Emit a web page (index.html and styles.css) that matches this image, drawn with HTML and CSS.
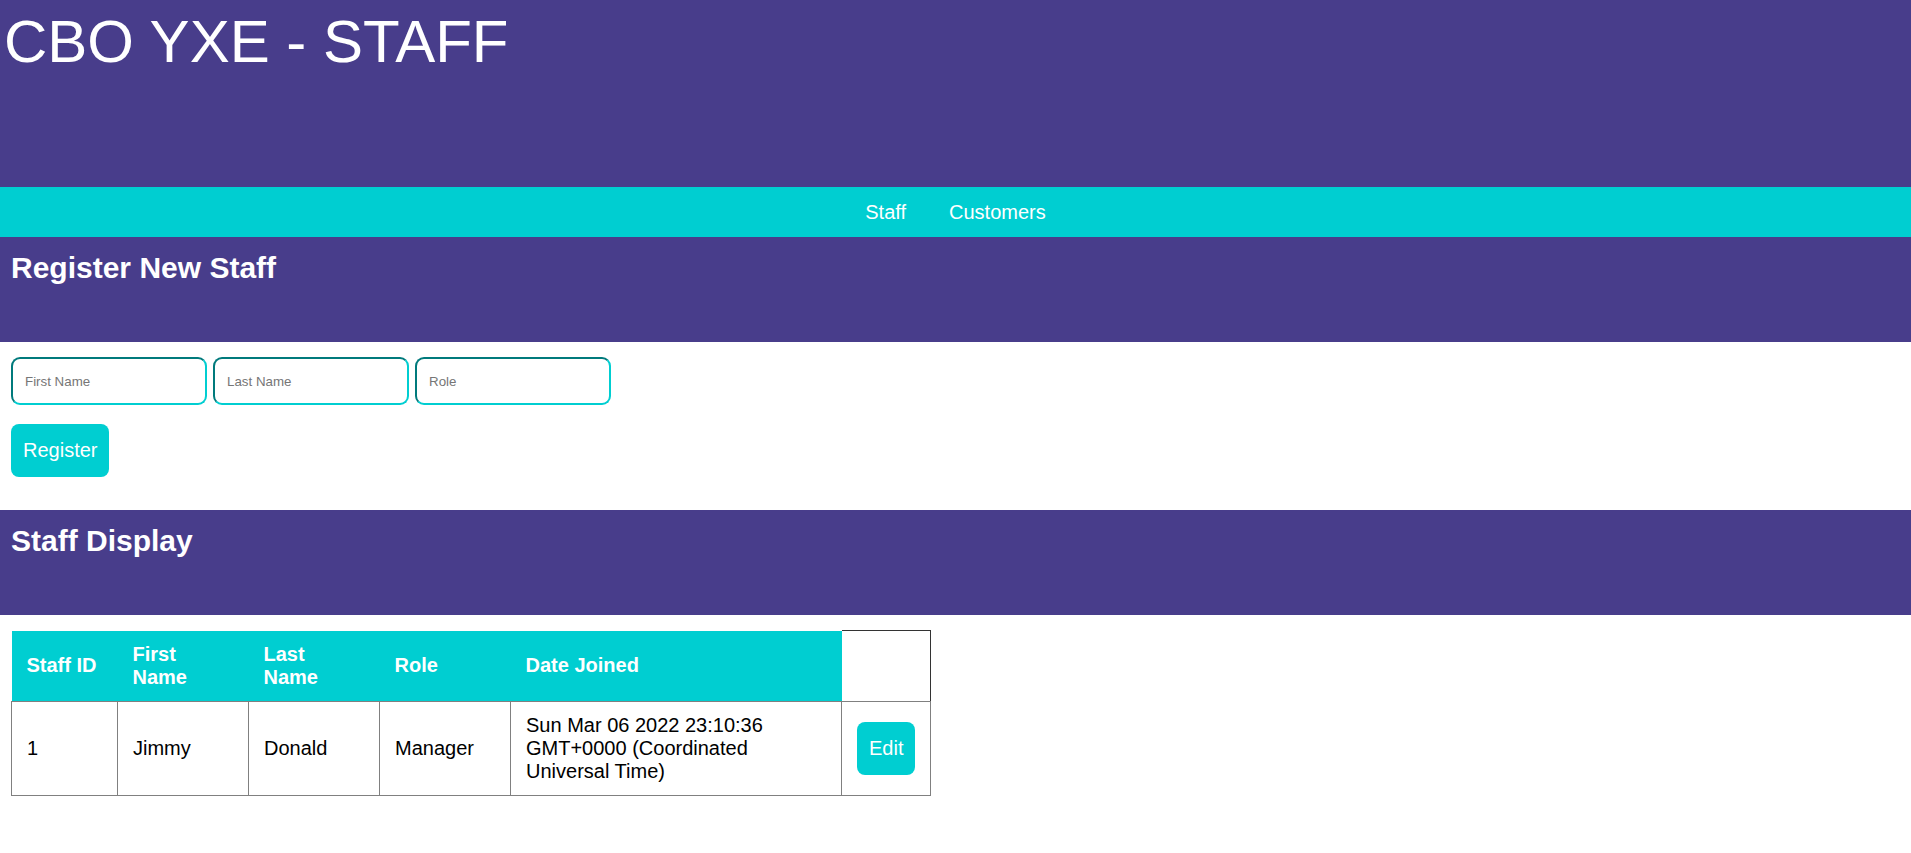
FILE: index.html
```html
<!DOCTYPE html>
<html lang="en">
<head>
<meta charset="utf-8">
<title>CBO YXE - STAFF</title>
<link rel="stylesheet" href="styles.css">
</head>
<body>
<header class="site-header">
  <h1 class="site-title">CBO YXE - STAFF</h1>
</header>
<nav class="site-nav">
  <a class="nav-link" href="#">Staff</a>
  <a class="nav-link" href="#">Customers</a>
</nav>
<section class="panel">
  <div class="band"><h2 class="band-title">Register New Staff</h2></div>
  <form class="reg-form">
    <div class="field-row">
      <input class="field" type="text" placeholder="First Name">
      <input class="field" type="text" placeholder="Last Name">
      <input class="field" type="text" placeholder="Role">
    </div>
    <button class="btn btn-register" type="button">Register</button>
  </form>
</section>
<section class="panel">
  <div class="band"><h2 class="band-title">Staff Display</h2></div>
  <div class="table-wrap">
    <table class="staff-table">
      <colgroup>
        <col class="c-id"><col class="c-first"><col class="c-last"><col class="c-role"><col class="c-date"><col class="c-act">
      </colgroup>
      <thead>
        <tr>
          <th class="th-main">Staff ID</th>
          <th class="th-main">First Name</th>
          <th class="th-main">Last Name</th>
          <th class="th-main">Role</th>
          <th class="th-main">Date Joined</th>
          <th class="th-empty"></th>
        </tr>
      </thead>
      <tbody>
        <tr>
          <td>1</td>
          <td>Jimmy</td>
          <td>Donald</td>
          <td>Manager</td>
          <td>Sun Mar 06 2022 23:10:36 GMT+0000 (Coordinated Universal Time)</td>
          <td><button class="btn btn-edit" type="button">Edit</button></td>
        </tr>
      </tbody>
    </table>
  </div>
</section>
</body>
</html>
```

FILE: styles.css
```css
* { box-sizing: border-box; }

body {
  margin: 0;
  font-family: "Liberation Sans", Arial, sans-serif;
  font-size: 20px;
  color: #000;
  background: #fff;
}

.site-header {
  background: #483d8b;
  height: 187px;
  padding: 7px 0 0 4px;
}

.site-title {
  margin: 0;
  font-size: 60px;
  font-weight: normal;
  color: #fff;
}

.site-nav {
  background: #00ced1;
  height: 50px;
  display: flex;
  justify-content: center;
  align-items: center;
  gap: 43px;
}

.nav-link {
  color: #fff;
  text-decoration: none;
  font-size: 20px;
}

.band {
  background: #483d8b;
  height: 105px;
  padding: 14px 11px 0;
}

.band-title {
  margin: 0;
  font-size: 30px;
  font-weight: bold;
  color: #fff;
}

.reg-form {
  padding: 15px 11px 33px;
}

.field-row {
  display: flex;
  gap: 6px;
}

.field {
  width: 196px;
  height: 48px;
  border: 2px solid;
  border-color: #007a7c #00ced1 #00ced1 #007a7c;
  border-radius: 9px;
  padding: 0 12px;
  font-family: "Liberation Sans", Arial, sans-serif;
  font-size: 13.33px;
  color: #000;
  background: #fff;
  outline: none;
}

.field::placeholder { color: #767676; }

.btn {
  border: none;
  background: #00ced1;
  color: #fff;
  font-family: "Liberation Sans", Arial, sans-serif;
  font-size: 20px;
  line-height: 23px;
  padding: 15px 12px;
  border-radius: 8px;
}

.btn-register { margin-top: 19px; display: block; }

.table-wrap { padding: 15px 11px; }

.staff-table {
  border-collapse: collapse;
  table-layout: fixed;
  width: 919px;
}

.c-id { width: 106px; }
.c-first { width: 131px; }
.c-last { width: 131px; }
.c-role { width: 131px; }
.c-date { width: 331px; }
.c-act { width: 89px; }

.staff-table th,
.staff-table td {
  padding: 12px 15px;
  text-align: left;
  vertical-align: middle;
  line-height: 23px;
}

.th-main {
  background: #00ced1;
  color: #fff;
  font-weight: bold;
  border: none;
}

.th-empty {
  background: #fff;
  border-top: 1px solid #333;
  border-right: 1px solid #333;
  border-bottom: 1px solid #808080;
}

.staff-table td {
  border: 1px solid #808080;
}
```
